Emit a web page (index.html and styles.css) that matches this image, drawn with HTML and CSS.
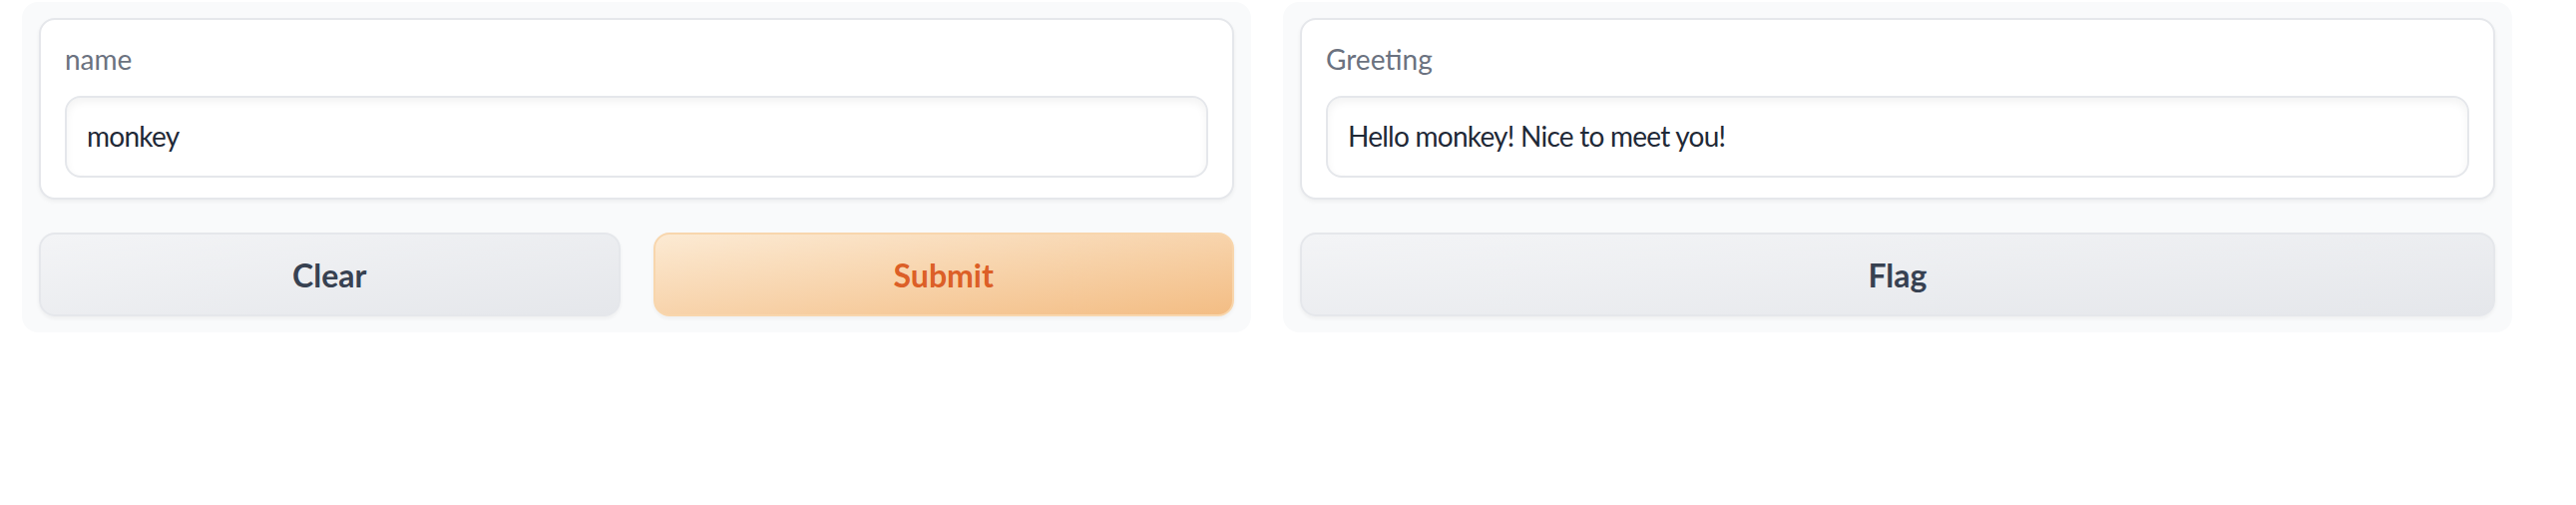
FILE: index.html
```html
<!DOCTYPE html>
<html lang="en">
<head>
<meta charset="utf-8">
<title>Greeting</title>
<link rel="stylesheet" href="styles.css">
</head>
<body>
<div class="app">
  <div class="panel">
    <div class="block">
      <label class="block-title" for="name-input">name</label>
      <input id="name-input" class="text-input" type="text" value="monkey">
    </div>
    <div class="btn-row">
      <button class="btn btn-secondary">Clear</button>
      <button class="btn btn-primary">Submit</button>
    </div>
  </div>
  <div class="panel">
    <div class="block">
      <label class="block-title" for="greet-output">Greeting</label>
      <input id="greet-output" class="text-input" type="text" value="Hello monkey! Nice to meet you!" readonly>
    </div>
    <div class="btn-row">
      <button class="btn btn-secondary">Flag</button>
    </div>
  </div>
</div>
</body>
</html>
```

FILE: styles.css
```css
* {
  box-sizing: border-box;
}

html, body {
  margin: 0;
  padding: 0;
  background: #ffffff;
}

body {
  font-family: Lato, "Noto Sans", "Liberation Sans", sans-serif;
  color: #1f2937;
}

.app {
  display: flex;
  gap: 32px;
  padding: 2px 64px 0 22px;
}

.panel {
  flex: 1 1 0;
  min-width: 0;
  display: flex;
  flex-direction: column;
  gap: 33px;
  background: #f9fafb;
  border-radius: 16px;
  padding: 16px 17px 16px 17px;
}

.block {
  background: #ffffff;
  border: 2px solid #e5e7eb;
  border-radius: 16px;
  box-shadow: 0 2px 4px rgba(0, 0, 0, 0.05);
  padding: 20px 24px;
  display: flex;
  flex-direction: column;
}

.block-title {
  display: block;
  font-size: 28px;
  line-height: 38px;
  height: 40px;
  color: #6b7280;
  margin-bottom: 16px;
}

.text-input {
  display: block;
  width: 100%;
  height: 82px;
  border: 2px solid #e5e7eb;
  border-radius: 16px;
  background: #ffffff;
  box-shadow: inset 0 4px 8px rgba(0, 0, 0, 0.05);
  padding: 19px 20px 21px;
  font-family: inherit;
  font-size: 28px;
  line-height: 38px;
  letter-spacing: -0.75px;
  color: #1f2937;
  outline: none;
}

.btn-row {
  display: flex;
  gap: 33px;
}

.btn {
  flex: 1 1 0;
  min-width: 0;
  height: 84px;
  border-radius: 16px;
  font-family: inherit;
  font-size: 32px;
  font-weight: 700;
  cursor: pointer;
  box-shadow: 0 2px 4px rgba(0, 0, 0, 0.05);
}

.btn-secondary {
  background: linear-gradient(to bottom right, #f3f4f6, #e5e7eb);
  border: 2px solid #e5e7eb;
  color: #374151;
}

.btn-primary {
  background: linear-gradient(to bottom right, #fcead3, #f3bd84);
  border: 2px solid #f8d6ad;
  color: #dc5f27;
}
```
